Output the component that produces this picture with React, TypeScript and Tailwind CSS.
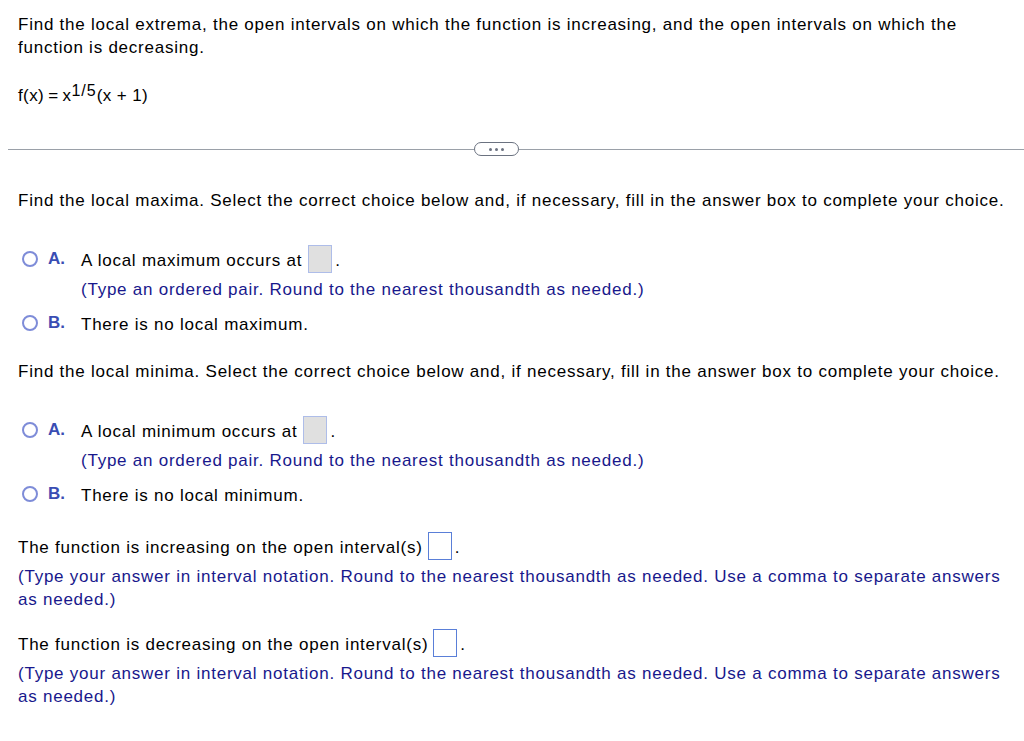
import React from 'react';

const Radio: React.FC<{ letter: string }> = ({ letter }) => (
  <div className="flex items-start w-[63px] shrink-0">
    <span className="mt-[2px] ml-[22px] w-[16px] h-[16px] rounded-full border-[2px] border-[#7e8cd8] shrink-0" />
    <span className="ml-[10px] font-bold text-[#3a4db3] leading-[20px] tracking-normal">{letter}</span>
  </div>
);

const GreyBox = () => (
  <span className="inline-block align-middle w-[24px] h-[28px] bg-[#e0e0e0] border border-[#aebde9] ml-[6px] mr-[3px] -mt-[4px]" />
);

const WhiteBox = () => (
  <span className="inline-block align-middle w-[24px] h-[28px] bg-white border border-[#5a7fd8] ml-[5px] mr-[3px] -mt-[4px]" />
);

const Note: React.FC<{ children: React.ReactNode }> = ({ children }) => (
  <div className="text-[#18188c]">{children}</div>
);

const Section: React.FC<{ kind: 'maximum' | 'minimum'; heading: string }> = ({ kind, heading }) => (
  <div>
    <p className="pl-[18px]">{heading}</p>
    <div className="mt-[37px] flex">
      <Radio letter="A." />
      <div className="ml-[18px]">
        <div className="flex items-center h-[23px]">
          A local {kind} occurs at<GreyBox />.
        </div>
        <div className="mt-[6px]">
          <Note>(Type an ordered pair. Round to the nearest thousandth as needed.)</Note>
        </div>
      </div>
    </div>
    <div className="mt-[12px] flex">
      <Radio letter="B." />
      <div className="ml-[18px]">There is no local {kind}.</div>
    </div>
  </div>
);

export default function App() {
  return (
    <div className="w-[1024px] h-[741px] bg-white text-black text-[17px] tracking-[0.76px] leading-[23px] overflow-hidden" style={{ fontFamily: '"Liberation Sans", Arial, sans-serif' }}>
      <div className="pt-[13px] pl-[18px] pr-[60px]">
        <p>Find the local extrema, the open intervals on which the function is increasing, and the open intervals on which the function is decreasing.</p>
        <p className="mt-[25px] tracking-[0.4px]">
          f(x)<span className="mx-[4px]">=</span>x<sup className="text-[16px] relative -top-[5px] tracking-[1px]">1/5</sup>(x + 1)
        </p>
      </div>

      <div className="mt-[35px] ml-[8px] flex items-center">
        <div className="h-[1px] w-[466px] bg-[#9aa0a8]" />
        <div className="w-[45px] h-[14px] rounded-full border-[1.5px] border-[#6b7280] flex items-center justify-center gap-[3px]">
          <span className="w-[3px] h-[3px] rounded-full bg-[#6b7280]" />
          <span className="w-[3px] h-[3px] rounded-full bg-[#6b7280]" />
          <span className="w-[3px] h-[3px] rounded-full bg-[#6b7280]" />
        </div>
        <div className="h-[1px] flex-1 bg-[#9aa0a8]" />
      </div>

      <div className="mt-[33px]">
        <Section kind="maximum" heading="Find the local maxima. Select the correct choice below and, if necessary, fill in the answer box to complete your choice." />
      </div>
      <div className="mt-[24px]">
        <Section kind="minimum" heading="Find the local minima. Select the correct choice below and, if necessary, fill in the answer box to complete your choice." />
      </div>

      <div className="mt-[29px] pl-[18px] pr-[14px]">
        <div className="flex items-center h-[23px]">The function is increasing on the open interval(s)<WhiteBox />.</div>
        <div className="mt-[6px]">
          <Note>(Type your answer in interval notation. Round to the nearest thousandth as needed. Use a comma to separate answers as needed.)</Note>
        </div>
      </div>

      <div className="mt-[22px] pl-[18px] pr-[14px]">
        <div className="flex items-center h-[23px]">The function is decreasing on the open interval(s)<WhiteBox />.</div>
        <div className="mt-[6px]">
          <Note>(Type your answer in interval notation. Round to the nearest thousandth as needed. Use a comma to separate answers as needed.)</Note>
        </div>
      </div>
    </div>
  );
}
